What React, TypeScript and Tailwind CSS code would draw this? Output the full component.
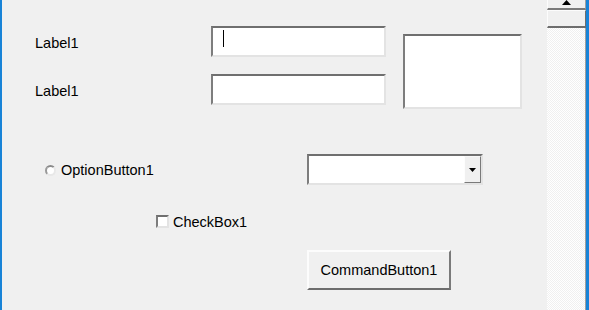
// VBA UserForm at runtime: labels, text boxes, list, option, combo, check, command button
const sunken =
  "border-2 border-t-[#6f6f6f] border-l-[#7d7d7d] border-r-[#e3e3e3] border-b-[#e3e3e3] bg-white";
const raised =
  "border-2 border-t-[#fcfcfc] border-l-[#fcfcfc] border-r-[#7a7a7a] border-b-[#6d6d6d] bg-[#f0f0f0]";

function LabelRow({ caret }: { caret?: boolean }) {
  return (
    <div className="flex h-[31px] items-center">
      <span className="w-[209px] shrink-0 pl-[33px] pt-[3px] leading-none">Label1</span>
      <div className={`relative h-[31px] w-[175px] ${sunken}`}>
        {caret && <span className="absolute left-[10px] top-[2px] h-[17px] w-px bg-black" />}
      </div>
    </div>
  );
}

function ComboBox() {
  return (
    <div className={`flex h-[31px] w-[176px] justify-end ${sunken}`}>
      <div className="flex w-[17px] items-center justify-center border border-t-[#f7f7f7] border-l-[#fdfdfd] border-r-[#7a7a7a] border-b-[#7a7a7a] bg-[#f0f0f0]">
        <svg width="7" height="4" viewBox="0 0 7 4">
          <polygon points="0,0 7,0 3.5,4" fill="#000" />
        </svg>
      </div>
    </div>
  );
}

function ScrollBar() {
  return (
    <div className="flex w-[39px] flex-col">
      <div className="flex h-[10px] justify-center border-b-2 border-b-[#7a7a7a] border-l border-l-[#fcfcfc] border-r border-r-[#a0a0a0] bg-[#f0f0f0]">
        <svg width="9" height="5" viewBox="0 0 9 5">
          <polygon points="0,5 4.5,0 9,5" fill="#000" />
        </svg>
      </div>
      <div className="h-[18px] border border-t-[#fcfcfc] border-l-[#fcfcfc] border-r-[#6d6d6d] border-b-2 border-b-[#6d6d6d] bg-[#f0f0f0]" />
      <div className="flex-1 border-r border-r-[#a0a0a0] bg-[repeating-conic-gradient(#f0f0f0_0%_25%,#ffffff_0%_50%)] bg-[length:2px_2px]" />
    </div>
  );
}

export default function App() {
  return (
    <div className="flex h-[310px] w-[589px] overflow-hidden bg-[#f0f0f0] font-['Liberation_Sans',Arial,sans-serif] text-[14.5px] text-[#000]">
      <div className="w-[2px] bg-[#1883d7]" />

      <main className="flex w-[545px] flex-col">
        <div className="flex items-start pt-[26px]">
          <div className="flex flex-col gap-[17px]">
            <LabelRow caret />
            <LabelRow />
          </div>
          <div className={`ml-[17px] mt-[8px] h-[75px] w-[119px] ${sunken}`} />
        </div>

        <div className="mt-[45px] flex h-[31px] items-center">
          <div className="flex w-[305px] items-center pl-[43px] pt-[2px]">
            <span className="h-[11px] w-[11px] rounded-full border-2 border-t-[#8a8a8a] border-l-[#9a9a9a] border-r-[#e8e8e8] border-b-[#e8e8e8] bg-white" />
            <span className="ml-[5px] leading-none">OptionButton1</span>
          </div>
          <ComboBox />
        </div>

        <div className="mt-[29px] flex h-[15px] items-center pl-[154px]">
          <span className={`h-[13px] w-[13px] ${sunken}`} />
          <span className="ml-[4px] pt-[1px] leading-none">CheckBox1</span>
        </div>

        <div className="mt-[21px] pl-[305px]">
          <button className={`h-[40px] w-[144px] ${raised} leading-none`}>CommandButton1</button>
        </div>
      </main>

      <ScrollBar />
      <div className="w-[3px] bg-[#1883d7]" />
    </div>
  );
}
